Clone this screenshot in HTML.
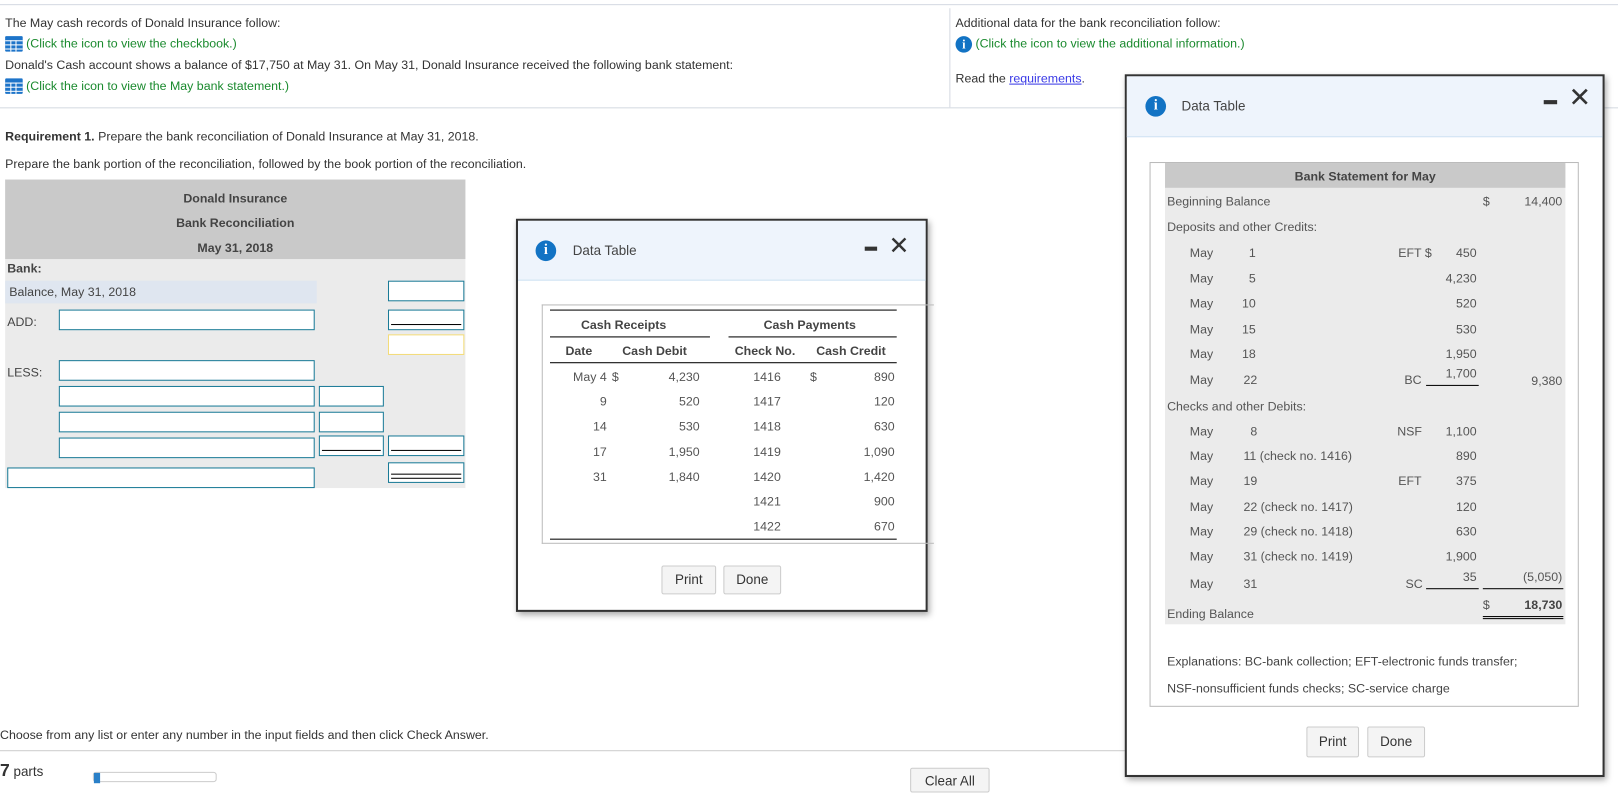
<!DOCTYPE html>
<html><head><meta charset="utf-8"><style>
*{margin:0;padding:0;box-sizing:border-box}
body{width:1618px;height:778px;overflow:hidden;background:#fff;font-family:"Liberation Sans",Arial,sans-serif;font-size:12px;color:#333;position:relative}
#w{position:absolute;left:0;top:0;width:1568px;height:754px;transform:scale(1.0319);transform-origin:0 0}
.a{position:absolute;white-space:nowrap;line-height:14px}
.g{color:#1a8a2e}
.inp{position:absolute;background:#fff;border:1px solid #1a7a96;height:20px}
.ul::after{content:"";position:absolute;left:2px;right:2px;bottom:4px;border-bottom:1px solid #000}
.dl::after{content:"";position:absolute;left:2px;right:2px;bottom:3px;height:3px;border-top:1px solid #000;border-bottom:1px solid #000}
.ic{display:inline-block;width:16px;height:16px;border-radius:50%;background:#1273c4;color:#fff;font:bold 12px/16px "Liberation Serif",serif;text-align:center;vertical-align:middle}
.grid{display:inline-block;width:17px;height:15px;background:#1d74c9;vertical-align:middle;position:relative;border-radius:1px}
.grid i{position:absolute;background:#fff}
.r{text-align:right}
.btn{position:absolute;background:#f4f4f4;border:1px solid #ccc;border-radius:2px;font-size:13px;text-align:center;color:#333}
</style></head><body><div id="w">
<div class="a" style="left:0;top:4px;width:1618px;border-top:1px solid #d5dae2"></div>
<div class="a" style="left:920px;top:8px;height:96px;border-left:1px solid #d5dae2"></div>
<div class="a" style="left:0;top:104px;width:1618px;border-top:1px solid #d5dae2"></div>

<div class="a" style="left:5px;top:15px">The May cash records of Donald Insurance follow:</div>
<div class="a g" style="left:5px;top:35px"><span class="grid"><i style="left:0;top:4px;width:17px;height:1px"></i><i style="left:0;top:8px;width:17px;height:1px"></i><i style="left:0;top:12px;width:17px;height:1px"></i><i style="left:5px;top:4px;width:1px;height:11px"></i><i style="left:10px;top:4px;width:1px;height:11px"></i></span> (Click the icon to view the checkbook.)</div>
<div class="a" style="left:5px;top:56px">Donald's Cash account shows a balance of $17,750 at May 31. On May 31, Donald Insurance received the following bank statement:</div>
<div class="a g" style="left:5px;top:76px"><span class="grid"><i style="left:0;top:4px;width:17px;height:1px"></i><i style="left:0;top:8px;width:17px;height:1px"></i><i style="left:0;top:12px;width:17px;height:1px"></i><i style="left:5px;top:4px;width:1px;height:11px"></i><i style="left:10px;top:4px;width:1px;height:11px"></i></span> (Click the icon to view the May bank statement.)</div>

<div class="a" style="left:926px;top:15px">Additional data for the bank reconciliation follow:</div>
<div class="a g" style="left:926px;top:35px"><span class="ic">i</span> (Click the icon to view the additional information.)</div>
<div class="a" style="left:926px;top:69px">Read the <span style="color:#3a3ae6;text-decoration:underline">requirements</span>.</div>

<div class="a" style="left:5px;top:125px"><b>Requirement 1.</b> Prepare the bank reconciliation of Donald Insurance at May 31, 2018.</div>
<div class="a" style="left:5px;top:152px">Prepare the bank portion of the reconciliation, followed by the book portion of the reconciliation.</div>

<div class="a" style="left:5px;top:174px;width:446px;height:299px;background:#ebebeb"></div>
<div class="a" style="left:5px;top:174px;width:446px;height:77px;background:#c9c9c9"></div>
<div class="a" style="left:5px;top:180px;width:446px;text-align:center;font-weight:bold;line-height:24px;color:#444">Donald Insurance<br>Bank Reconciliation<br>May 31, 2018</div>
<div class="a" style="left:7px;top:253px;font-weight:bold;color:#444">Bank:</div>
<div class="a" style="left:5px;top:272px;width:302px;height:22px;background:#dfe6f0"></div>
<div class="a" style="left:9px;top:276px;color:#444">Balance, May 31, 2018</div>
<div class="a" style="left:7px;top:305px;color:#444">ADD:</div>
<div class="a" style="left:7px;top:354px;color:#444">LESS:</div>
<div class="inp" style="left:376px;top:272px;width:74px"></div>
<div class="inp" style="left:57px;top:300px;width:248px"></div>
<div class="inp ul" style="left:376px;top:300px;width:74px"></div>
<div class="inp" style="left:376px;top:324px;width:74px;border-color:#f3dc7a"></div>
<div class="inp" style="left:57px;top:349px;width:248px"></div>
<div class="inp" style="left:57px;top:374px;width:248px"></div>
<div class="inp" style="left:309px;top:374px;width:63px"></div>
<div class="inp" style="left:57px;top:399px;width:248px"></div>
<div class="inp" style="left:309px;top:399px;width:63px"></div>
<div class="inp" style="left:57px;top:424px;width:248px"></div>
<div class="inp ul" style="left:309px;top:422px;width:63px"></div>
<div class="inp ul" style="left:376px;top:422px;width:74px"></div>
<div class="inp" style="left:7px;top:453px;width:298px"></div>
<div class="inp dl" style="left:376px;top:448px;width:74px"></div>

<div class="a" style="left:0;top:705px">Choose from any list or enter any number in the input fields and then click Check Answer.</div>
<div class="a" style="left:0;top:727px;width:1100px;border-top:1px solid #ccc"></div>
<div class="a" style="left:0;top:740px;font-size:13px"><b style="font-size:17px;color:#333">7</b> parts</div>
<div class="a" style="left:90px;top:748px;width:120px;height:10px;border:1px solid #ccc;border-radius:3px;background:#fff"><div style="width:6px;height:10px;background:#2a80c8"></div></div>
<div class="btn" style="left:882px;top:744px;width:77px;height:24px;padding-top:4px">Clear All</div>

<!-- middle modal -->
<div class="a" style="left:500px;top:212px;width:399px;height:381px;background:#fff;border:2px solid #333;box-shadow:2px 3px 6px rgba(0,0,0,.35)">
 <div style="position:absolute;left:0;top:0;right:0;height:58px;background:#eef4fc;border-bottom:1px solid #cfe3f3"></div>
 <div class="a" style="left:17px;top:19px"><span class="ic" style="width:20px;height:20px;line-height:20px;font-size:14px">i</span></div>
 <div class="a" style="left:53px;top:22px;font-size:13px;color:#444">Data Table</div>
 <div class="a" style="left:336px;top:25px;width:12px;height:4px;background:#333"></div>
 <div class="a" style="left:359px;top:12px;font-size:24px;line-height:26px;color:#333">✕</div>
 <div class="a" style="left:23px;top:81px;width:380px;height:232px;border:1px solid #bbb;border-right:none"></div>
 <div class="a" style="left:31px;top:86px;width:336px;border-top:1px solid #000"></div>
 <div class="a" style="left:31px;top:112px;width:155px;border-top:1px solid #000"></div>
 <div class="a" style="left:204px;top:112px;width:163px;border-top:1px solid #000"></div>
 <div class="a" style="left:31px;top:137px;width:336px;border-top:1px solid #000"></div>
 <div class="a" style="left:31px;top:308px;width:336px;border-top:1px solid #000"></div>
 <div class="a" style="left:61px;top:94px;font-weight:bold;color:#444">Cash Receipts</div>
 <div class="a" style="left:238px;top:94px;font-weight:bold;color:#444">Cash Payments</div>
 <div class="a" style="left:46px;top:119px;font-weight:bold;color:#444">Date</div>
 <div class="a" style="left:101px;top:119px;font-weight:bold;color:#444">Cash Debit</div>
 <div class="a" style="left:210px;top:119px;font-weight:bold;color:#444">Check No.</div>
 <div class="a" style="left:289px;top:119px;font-weight:bold;color:#444">Cash Credit</div>
 <div class="a r" style="left:20px;top:139px;line-height:24.2px;width:66px;color:#555">May 4<br>9<br>14<br>17<br>31</div>
 <div class="a" style="left:91px;top:144px;color:#555">$</div>
 <div class="a r" style="left:110px;top:139px;width:66px;line-height:24.2px;color:#555">4,230<br>520<br>530<br>1,950<br>1,840</div>
 <div class="a" style="left:228px;top:139px;line-height:24.2px;color:#555">1416<br>1417<br>1418<br>1419<br>1420<br>1421<br>1422</div>
 <div class="a" style="left:283px;top:144px;color:#555">$</div>
 <div class="a r" style="left:300px;top:139px;width:65px;line-height:24.2px;color:#555">890<br>120<br>630<br>1,090<br>1,420<br>900<br>670</div>
 <div class="btn" style="left:139px;top:334px;width:53px;height:28px;line-height:26px">Print</div>
 <div class="btn" style="left:199px;top:334px;width:56px;height:28px;line-height:26px">Done</div>
</div>

<!-- right modal -->
<div class="a" style="left:1090px;top:72px;width:465px;height:681px;background:#fff;border:2px solid #333;box-shadow:2px 3px 6px rgba(0,0,0,.35)">
 <div style="position:absolute;left:0;top:0;right:0;height:59px;background:#eef4fc;border-bottom:1px solid #cfe3f3"></div>
 <div class="a" style="left:18px;top:19px"><span class="ic" style="width:20px;height:20px;line-height:20px;font-size:14px">i</span></div>
 <div class="a" style="left:53px;top:22px;font-size:13px;color:#444">Data Table</div>
 <div class="a" style="left:404px;top:23px;width:13px;height:4px;background:#333"></div>
 <div class="a" style="left:428px;top:6px;font-size:26px;line-height:28px;color:#333">✕</div>
 <div class="a" style="left:22px;top:83px;width:416px;height:528px;border:1px solid #bbb"></div>
</div>
<div class="a" style="left:1129px;top:158px;width:388px;height:447px;background:#ebebeb"></div>
<div class="a" style="left:1129px;top:158px;width:388px;height:24px;background:#c9c9c9;text-align:center;font-weight:bold;line-height:26px;color:#444">Bank Statement for May</div>
<div class="a" style="left:1131px;top:188px;color:#555">Beginning Balance</div>
<div class="a" style="left:1437px;top:188px;color:#555">$</div>
<div class="a r" style="left:1456px;top:188px;width:58px;color:#555">14,400</div>
<div class="a" style="left:1131px;top:213px;color:#555">Deposits and other Credits:</div>
<div class="a" style="left:1153px;top:233px;line-height:24.5px;color:#555">May<br>May<br>May<br>May<br>May</div>
<div class="a r" style="left:1190px;top:233px;width:27px;line-height:24.5px;color:#555">1<br>5<br>10<br>15<br>18</div>
<div class="a" style="left:1355px;top:238px;color:#555">EFT $</div>
<div class="a r" style="left:1373px;top:233px;width:58px;line-height:24.5px;color:#555">450<br>4,230<br>520<br>530<br>1,950</div>
<div class="a" style="left:1153px;top:361px;color:#555">May</div>
<div class="a" style="left:1205px;top:361px;color:#555">22</div>
<div class="a" style="left:1361px;top:361px;color:#555">BC</div>
<div class="a r" style="left:1373px;top:355px;width:58px;color:#555">1,700</div>
<div class="a" style="left:1382px;top:373px;width:51px;border-top:1px solid #000"></div>
<div class="a r" style="left:1456px;top:362px;width:58px;color:#555">9,380</div>
<div class="a" style="left:1131px;top:387px;color:#555">Checks and other Debits:</div>
<div class="a" style="left:1153px;top:406px;line-height:24.2px;color:#555">May<br>May<br>May<br>May<br>May<br>May</div>
<div class="a" style="left:1205px;top:406px;line-height:24.2px;color:#555">&nbsp;&nbsp;8<br>11 (check no. 1416)<br>19<br>22 (check no. 1417)<br>29 (check no. 1418)<br>31 (check no. 1419)</div>
<div class="a" style="left:1354px;top:411px;color:#555">NSF</div>
<div class="a" style="left:1355px;top:459px;color:#555">EFT</div>
<div class="a r" style="left:1373px;top:406px;width:58px;line-height:24.2px;color:#555">1,100<br>890<br>375<br>120<br>630<br>1,900</div>
<div class="a" style="left:1153px;top:559px;color:#555">May</div>
<div class="a" style="left:1205px;top:559px;color:#555">31</div>
<div class="a" style="left:1362px;top:559px;color:#555">SC</div>
<div class="a r" style="left:1373px;top:552px;width:58px;color:#555">35</div>
<div class="a" style="left:1382px;top:570px;width:51px;border-top:1px solid #000"></div>
<div class="a r" style="left:1450px;top:552px;width:64px;color:#555">(5,050)</div>
<div class="a" style="left:1437px;top:570px;width:78px;border-top:1px solid #000"></div>
<div class="a" style="left:1131px;top:588px;color:#555">Ending Balance</div>
<div class="a" style="left:1437px;top:579px;color:#555">$</div>
<div class="a r" style="left:1456px;top:579px;width:58px;font-weight:bold;color:#444">18,730</div>
<div class="a" style="left:1437px;top:597px;width:78px;height:3px;border-top:1px solid #000;border-bottom:1px solid #000"></div>
<div class="a" style="left:1131px;top:634px;color:#444">Explanations: BC-bank collection; EFT-electronic funds transfer;</div>
<div class="a" style="left:1131px;top:660px;color:#444">NSF-nonsufficient funds checks; SC-service charge</div>
<div class="btn" style="left:1266px;top:704px;width:51px;height:30px;line-height:28px">Print</div>
<div class="btn" style="left:1325px;top:704px;width:56px;height:30px;line-height:28px">Done</div>
</div></body></html>
